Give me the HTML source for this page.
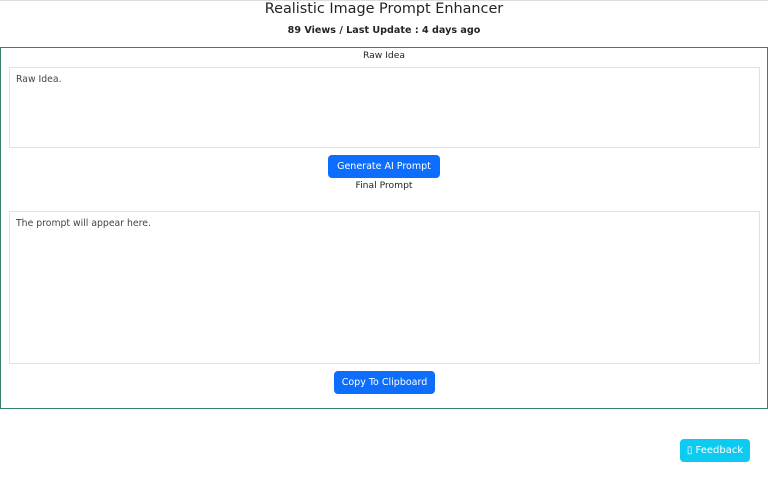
<html><head><style>
body{margin:0;width:768px;height:480px;font-family:"DejaVu Sans","Liberation Sans",sans-serif;background:#fff;position:relative;overflow:hidden;color:#212529}
.a{position:absolute}
.t{left:0;width:768px;text-align:center}
.ta{border:1px solid #dee2e6;left:9px;width:751px;box-sizing:border-box;font-size:9.3px;color:#444;padding:6px}
.btn{background:#0d6efd;color:#fff;border-radius:4px;font-size:9.5px;text-align:center;box-sizing:border-box}
</style></head><body>
<div class="a" style="left:0;top:0;width:768px;height:1px;background:#ddd"></div>
<div class="a t" style="top:1px;font-size:14.4px;line-height:17px">Realistic Image Prompt Enhancer</div>
<div class="a t" style="top:24px;font-size:9.6px;font-weight:bold;line-height:13px">89 Views / Last Update : 4 days ago</div>
<div class="a" style="left:0;top:47px;width:768px;height:362px;border:1px solid #3a8070;box-sizing:border-box"></div>
<div class="a t" style="top:50px;font-size:9.2px;line-height:12px">Raw Idea</div>
<div class="a ta" style="top:67px;height:81px">Raw Idea.</div>
<div class="a btn" style="left:328px;top:155px;width:112px;height:23px;line-height:23px">Generate AI Prompt</div>
<div class="a t" style="top:180px;font-size:9.2px;line-height:12px">Final Prompt</div>
<div class="a ta" style="top:211px;height:153px">The prompt will appear here.</div>
<div class="a btn" style="left:334px;top:371px;width:101px;height:23px;line-height:23px">Copy To Clipboard</div>
<div class="a btn" style="left:680px;top:439px;width:70px;height:23px;line-height:23px;background:#0dcaf0;font-size:10px">▯ Feedback</div>
</body></html>
